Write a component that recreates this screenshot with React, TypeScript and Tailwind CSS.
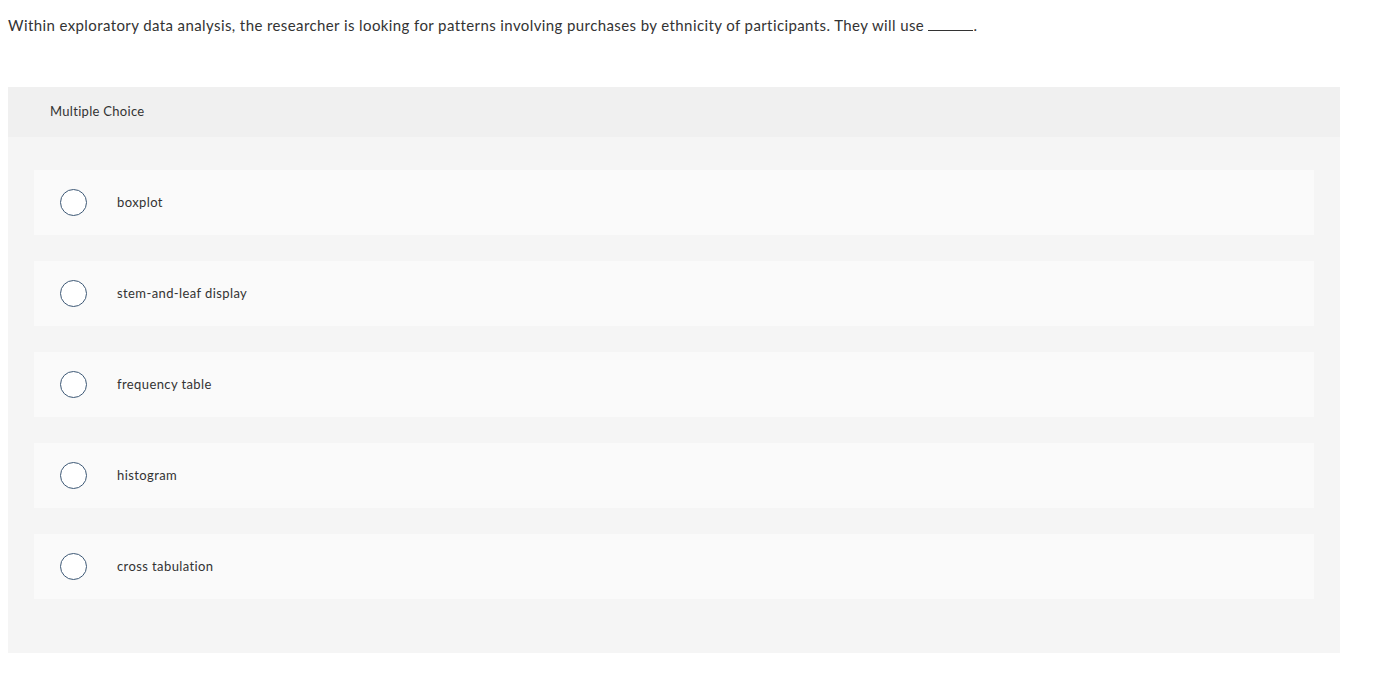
const options = [
  "boxplot",
  "stem-and-leaf display",
  "frequency table",
  "histogram",
  "cross tabulation",
];

export default function App() {
  return (
    <div className="min-h-screen bg-white text-[#333] font-['Lato','Liberation_Sans',sans-serif]">
      <p className="px-2 pt-[15px] text-[15px] leading-[20px] tracking-[0.4px]">
        Within exploratory data analysis, the researcher is looking for patterns involving purchases by
        ethnicity of participants. They will use{" "}
        <span className="inline-block w-[45px] border-b border-[#333] align-baseline" />.
      </p>

      <section className="mt-[52px] ml-2 w-[1332px] bg-[#f5f5f5]">
        <div className="h-[50px] flex items-center pl-[42px] bg-[#f0f0f0] text-[13px] tracking-[0.3px] text-[#333]">
          Multiple Choice
        </div>
        <div className="px-[26px] pt-[33px] pb-[54px] flex flex-col gap-[26px]">
          {options.map((o) => (
            <label
              key={o}
              className="h-[65px] bg-[#fafafa] flex items-center pl-[26px] gap-[30px] text-[13px] tracking-[0.4px] text-[#333]"
            >
              <span className="w-[27px] h-[27px] rounded-full border-[1.5px] border-[#3d5875] bg-white" />
              {o}
            </label>
          ))}
        </div>
      </section>
    </div>
  );
}
